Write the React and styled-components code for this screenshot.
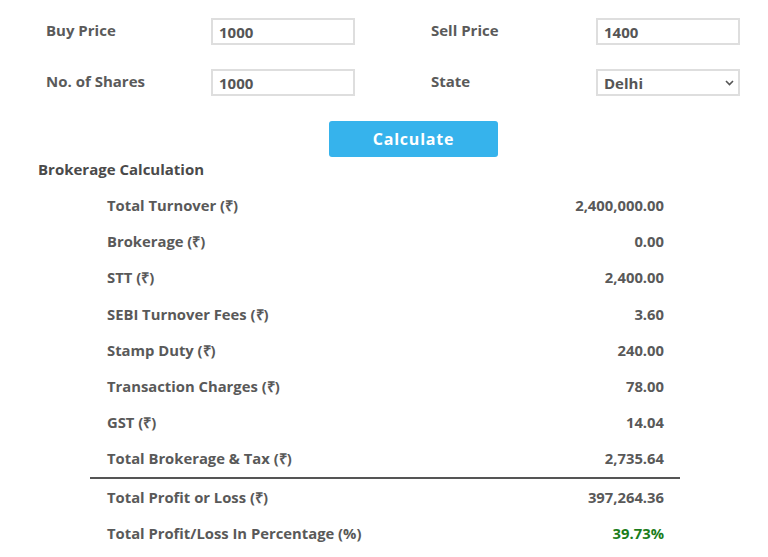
import React from "react";
import styled, { createGlobalStyle } from "styled-components";

const GlobalStyle = createGlobalStyle`
  body {
    margin: 0;
    background: #fff;
    font-family: "Open Sans", "Liberation Sans", sans-serif;
    color: #555;
  }
`;

const Page = styled.div`
  width: 768px;
  height: 557px;
  overflow: hidden;
  padding-top: 18px;
  box-sizing: border-box;
`;

const FormGrid = styled.div`
  display: grid;
  grid-template-columns: 165px 144px 76px 165px 144px;
  row-gap: 24px;
  padding-left: 46px;
  align-items: center;
`;

const Label = styled.label`
  font-size: 15px;
  font-weight: 700;
  color: #5a5a5a;
  margin-top: -3px;
`;

const Input = styled.div`
  height: 27px;
  box-sizing: border-box;
  border: 2px solid #dedede;
  padding: 0 4px 0 6px;
  display: flex;
  align-items: center;
  justify-content: space-between;
  font-size: 15px;
  font-weight: 700;
  color: #555;
`;

const Spacer = styled.div``;

const ButtonRow = styled.div`
  padding-left: 329px;
  margin-top: 25px;
`;

const Button = styled.button`
  width: 169px;
  height: 36px;
  border: none;
  border-radius: 3px;
  background: #36b3ec;
  color: #fff;
  font-family: "Open Sans", sans-serif;
  font-size: 16px;
  font-weight: 700;
  letter-spacing: 0.8px;
`;

const Heading = styled.h3`
  margin: 2px 0 0 38px;
  font-size: 15px;
  font-weight: 700;
  color: #4a4a4a;
`;

const Table = styled.div`
  margin: 8px 0 0 90px;
  width: 590px;
`;

const Row = styled.div`
  display: flex;
  justify-content: space-between;
  align-items: center;
  height: 36.2px;
  padding: 0 16px 0 17px;
  font-size: 14.8px;
  font-weight: 700;
  color: #595959;
  border-top: ${(p) => (p.$divider ? "2px solid #555" : "none")};
`;

const Value = styled.span`
  color: ${(p) => (p.$green ? "#1b7d1b" : "#595959")};
`;

const rows = [
  ["Total Turnover (₹)", "2,400,000.00"],
  ["Brokerage (₹)", "0.00"],
  ["STT (₹)", "2,400.00"],
  ["SEBI Turnover Fees (₹)", "3.60"],
  ["Stamp Duty (₹)", "240.00"],
  ["Transaction Charges (₹)", "78.00"],
  ["GST (₹)", "14.04"],
  ["Total Brokerage & Tax (₹)", "2,735.64"],
];

const Chevron = () => (
  <svg width="9" height="6" viewBox="0 0 9 6">
    <path d="M1 1 L4.5 4.5 L8 1" fill="none" stroke="#555" strokeWidth="1.6" />
  </svg>
);

export default function App() {
  return (
    <Page>
      <GlobalStyle />
      <FormGrid>
        <Label>Buy Price</Label>
        <Input>1000</Input>
        <Spacer />
        <Label>Sell Price</Label>
        <Input>1400</Input>
        <Label>No. of Shares</Label>
        <Input>1000</Input>
        <Spacer />
        <Label>State</Label>
        <Input>
          Delhi
          <Chevron />
        </Input>
      </FormGrid>
      <ButtonRow>
        <Button>Calculate</Button>
      </ButtonRow>
      <Heading>Brokerage Calculation</Heading>
      <Table>
        {rows.map(([l, v]) => (
          <Row key={l}>
            <span>{l}</span>
            <Value>{v}</Value>
          </Row>
        ))}
        <Row $divider>
          <span>Total Profit or Loss (₹)</span>
          <Value>397,264.36</Value>
        </Row>
        <Row>
          <span>Total Profit/Loss In Percentage (%)</span>
          <Value $green>39.73%</Value>
        </Row>
      </Table>
    </Page>
  );
}
